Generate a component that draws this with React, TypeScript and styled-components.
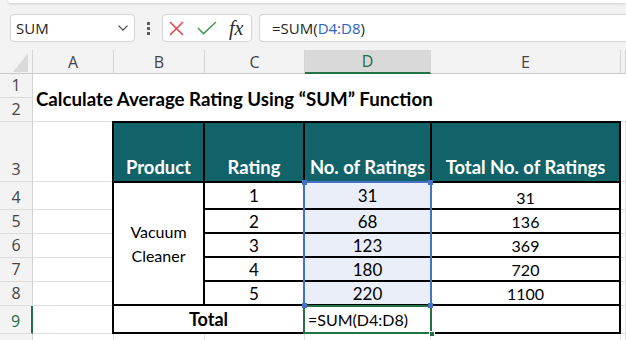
import React from 'react';
import styled, { createGlobalStyle } from 'styled-components';

const UI_FONT = `"Open Sans", "Noto Sans", sans-serif`;
const CELL_FONT = `"Lato", "Liberation Sans", sans-serif`;

const TEAL = '#126369';
const SEL_BLUE = '#4472c4';
const XL_GREEN = '#217346';
const GRID = '#e1e1e1';

const GlobalStyle = createGlobalStyle`
    html, body {
        margin: 0;
        padding: 0;
        background: #fff;
    }
    body {
        font-family: ${CELL_FONT};
        overflow: hidden;
    }
    *, *::before, *::after {
        box-sizing: border-box;
    }
`;

const Window = styled.div`
    width: 626px;
    height: 340px;
    overflow: hidden;
    display: flex;
    flex-direction: column;
    background: #f3f3f3;
`;

const RibbonEdge = styled.div`
    flex: none;
    height: 3px;
    margin-left: 8px;
    background: #fff;
    border-bottom-left-radius: 6px;
    box-shadow: 0 1px 3px rgba(0, 0, 0, 0.16);
`;

/* ---------- formula bar ---------- */

const FormulaBar = styled.div`
    flex: none;
    height: 47px;
    display: flex;
    align-items: flex-start;
    padding: 11px 0 0 10px;
    font-family: ${UI_FONT};
`;

const Field = styled.div`
    height: 28px;
    background: #fff;
    border: 1px solid #d5d5d5;
    border-radius: 4px;
    display: flex;
    align-items: center;
`;

const NameBox = styled(Field)`
    width: 125px;
    padding: 0 6px 0 5px;
    justify-content: space-between;
    font-size: 15px;
    color: #1f1f1f;
`;

const Grip = styled.div`
    width: 3px;
    margin: 8px 12px 0;
    display: flex;
    flex-direction: column;
    gap: 2px;

    i {
        width: 3px;
        height: 3px;
        background: #5c5c5c;
    }
`;

const FxBox = styled(Field)`
    width: 90px;
    margin-right: 7px;
    padding-left: 6px;
`;

const FxLabel = styled.span`
    margin-left: 12px;
    font-family: "Liberation Serif", serif;
    font-style: italic;
    font-size: 20px;
    color: #2b2b2b;
    line-height: 1;
`;

const FormulaInput = styled(Field)`
    flex: 1;
    margin-right: -10px;
    padding-left: 12px;
    font-size: 15px;
    color: #1f1f1f;
    border-right: none;
    border-radius: 4px 0 0 4px;
`;

const Ref = styled.span`
    color: #2a62c9;
`;

/* ---------- sheet grid ---------- */

const Sheet = styled.div`
    flex: none;
    display: grid;
    grid-template-columns: 33px 81px 91px 100px 126px 190px 1fr;
    grid-template-rows: 24px 24px 24px 60px 28px 24px 24px 24px 24px 28px 24px;
    background: #fff;
`;

const Corner = styled.div`
    position: relative;
    background: #f3f3f3;
    border-right: 1px solid #d4d4d4;
    border-bottom: 1px solid #c8c8c8;

    &::after {
        content: '';
        position: absolute;
        right: 4px;
        bottom: 1px;
        width: 15px;
        height: 19px;
        background: #d9d9d9;
        clip-path: polygon(100% 0, 100% 100%, 0 100%);
    }
`;

const ColHead = styled.div<{ $active?: boolean }>`
    display: flex;
    align-items: center;
    justify-content: center;
    font-family: ${UI_FONT};
    font-size: 16px;
    color: ${p => (p.$active ? '#1e6b41' : '#444')};
    background: ${p => (p.$active ? '#d9d9d9' : '#f3f3f3')};
    border-right: 1px solid #d4d4d4;
    border-bottom: ${p => (p.$active ? `2px solid ${XL_GREEN}` : '1px solid #c8c8c8')};
`;

const RowHead = styled.div<{ $active?: boolean }>`
    display: flex;
    align-items: flex-end;
    justify-content: center;
    padding-bottom: 4px;
    font-family: ${UI_FONT};
    font-size: 16px;
    line-height: 16px;
    color: ${p => (p.$active ? '#1e6b41' : '#444')};
    background: #f3f3f3;
    border-right: ${p => (p.$active ? `2px solid ${XL_GREEN}` : '1px solid #d4d4d4')};
    border-bottom: 1px solid #dcdcdc;
`;

const GridCell = styled.div`
    background: #fff;
    border-right: 1px solid ${GRID};
    border-bottom: 1px solid ${GRID};
`;

const Title = styled.div`
    grid-column: 2 / -1;
    grid-row: 2 / span 2;
    display: flex;
    align-items: center;
    padding: 2px 0 0 3px;
    border-bottom: 1px solid ${GRID};
    font-family: ${CELL_FONT};
    font-weight: 700;
    font-size: 18.7px;
    color: #000;
    white-space: nowrap;
`;

/* ---------- the bordered table ---------- */

const DataTable = styled.div`
    grid-column: 3 / 7;
    grid-row: 4 / 11;
    margin: -1px 0 0 -2px;
    display: grid;
    grid-template-columns: 91px 100px 127px 189px;
    grid-template-rows: 60px 27px 24px 24px 24px 24px 28px;
    border-top: 2px solid #000;
    border-left: 2px solid #000;
    background: #fff;
    font-family: ${CELL_FONT};
    color: #000;
    z-index: 1;
`;

const Cell = styled.div<{ $size?: number; $bottom?: boolean; $bold?: boolean; $span?: number }>`
    display: flex;
    justify-content: center;
    align-items: ${p => (p.$bottom ? 'flex-end' : 'center')};
    padding-bottom: ${p => (p.$bottom ? '1px' : '0')};
    border-right: 2px solid #000;
    border-bottom: 2px solid #000;
    font-size: ${p => p.$size ?? 17}px;
    font-weight: ${p => (p.$bold ? 700 : 400)};
    ${p => (p.$span ? `grid-column: span ${p.$span};` : '')}
    white-space: nowrap;
`;

const HeadCell = styled(Cell)`
    align-items: flex-end;
    padding-bottom: 3px;
    background: ${TEAL};
    color: #fff;
    font-weight: 700;
    font-size: 18.4px;
`;

const ProductCell = styled(Cell)`
    grid-row: span 5;
    text-align: center;
    line-height: 24px;
    font-size: 16px;
    white-space: normal;
`;

const Range = styled.div`
    grid-column: 3;
    grid-row: 2 / span 5;
    display: grid;
    grid-template-rows: 27px repeat(4, 24px);
    position: relative;

    &::after {
        content: '';
        position: absolute;
        top: -2px;
        left: -2px;
        right: 0;
        bottom: -1px;
        border: 2px solid ${SEL_BLUE};
        z-index: 1;
        pointer-events: none;
    }
`;

const RangeCell = styled(Cell)`
    background: #e9eef8;
`;

const Handle = styled.span<{ $v: 'top' | 'bottom'; $h: 'left' | 'right' }>`
    position: absolute;
    width: 5px;
    height: 5px;
    background: ${SEL_BLUE};
    z-index: 3;
    ${p => (p.$v === 'top' ? 'top: -3px;' : 'bottom: -2px;')}
    ${p => (p.$h === 'left' ? 'left: -3px;' : 'right: -1px;')}
`;

const ActiveCell = styled(Cell)`
    position: relative;
    justify-content: flex-start;
    padding-left: 3px;
    font-size: 16px;

    &::after {
        content: '';
        position: absolute;
        top: -1px;
        left: -2px;
        right: -2px;
        bottom: -2px;
        border: 2px solid ${XL_GREEN};
        z-index: 2;
        pointer-events: none;
    }
`;

const FillHandle = styled.span`
    position: absolute;
    right: -5px;
    bottom: -5px;
    width: 6px;
    height: 6px;
    background: ${XL_GREEN};
    border: 1px solid #fff;
    z-index: 3;
`;

const COLUMNS = ['A', 'B', 'C', 'D', 'E'];

const DATA = [
    { rating: 1, count: 31, total: 31 },
    { rating: 2, count: 68, total: 136 },
    { rating: 3, count: 123, total: 369 },
    { rating: 4, count: 180, total: 720 },
    { rating: 5, count: 220, total: 1100 },
];

function CancelIcon()
{
    return (
        <svg width="15" height="15" viewBox="0 0 15 15">
            <path d="M1 1L14 14M14 1L1 14" stroke="#e2444a" strokeWidth="1.5" fill="none" />
        </svg>
    );
}

function EnterIcon()
{
    return (
        <svg width="20" height="14" viewBox="0 0 20 14" style={{ marginLeft: 13 }}>
            <path d="M1 7L6.5 12.6L19 1" stroke="#3f9d54" strokeWidth="1.5" fill="none" />
        </svg>
    );
}

function Chevron()
{
    return (
        <svg width="10" height="6" viewBox="0 0 10 6">
            <path d="M0.5 0.6L5 5.1L9.5 0.6" stroke="#444" strokeWidth="1.2" fill="none" />
        </svg>
    );
}

export default function App()
{
    return (
        <>
            <GlobalStyle />
            <Window>
                <RibbonEdge />
                <FormulaBar>
                    <NameBox>
                        <span>SUM</span>
                        <Chevron />
                    </NameBox>
                    <Grip><i /><i /><i /></Grip>
                    <FxBox>
                        <CancelIcon />
                        <EnterIcon />
                        <FxLabel>fx</FxLabel>
                    </FxBox>
                    <FormulaInput>
                        =SUM(<Ref>D4:D8</Ref>)
                    </FormulaInput>
                </FormulaBar>

                <Sheet>
                    <Corner />
                    {COLUMNS.map(c => (
                        <ColHead key={c} $active={c === 'D'}>{c}</ColHead>
                    ))}
                    <ColHead />

                    <RowHead>1</RowHead>
                    <Title>Calculate Average Rating Using “SUM” Function</Title>
                    <RowHead>2</RowHead>

                    {[3, 4, 5, 6, 7, 8, 9].map(r => (
                        <React.Fragment key={r}>
                            <RowHead $active={r === 9}>{r}</RowHead>
                            <GridCell />
                            <GridCell />
                        </React.Fragment>
                    ))}

                    {/* row 10 is only a sliver at the bottom edge */}
                    <RowHead />
                    {[0, 1, 2, 3, 4, 5].map(i => <GridCell key={i} />)}

                    <DataTable>
                        <HeadCell>Product</HeadCell>
                        <HeadCell>Rating</HeadCell>
                        <HeadCell>No. of Ratings</HeadCell>
                        <HeadCell>Total No. of Ratings</HeadCell>

                        <ProductCell>Vacuum<br />Cleaner</ProductCell>
                        <Range>
                            {DATA.map(d => (
                                <RangeCell key={d.rating}>{d.count}</RangeCell>
                            ))}
                            <Handle $v="top" $h="left" />
                            <Handle $v="top" $h="right" />
                            <Handle $v="bottom" $h="left" />
                            <Handle $v="bottom" $h="right" />
                        </Range>
                        {DATA.map(d => (
                            <React.Fragment key={d.rating}>
                                <Cell>{d.rating}</Cell>
                                <Cell $size={16} $bottom>{d.total}</Cell>
                            </React.Fragment>
                        ))}

                        <Cell $span={2} $bold $size={18}>Total</Cell>
                        <ActiveCell>
                            =SUM(D4:D8)
                            <FillHandle />
                        </ActiveCell>
                        <Cell />
                    </DataTable>
                </Sheet>
            </Window>
        </>
    );
}
